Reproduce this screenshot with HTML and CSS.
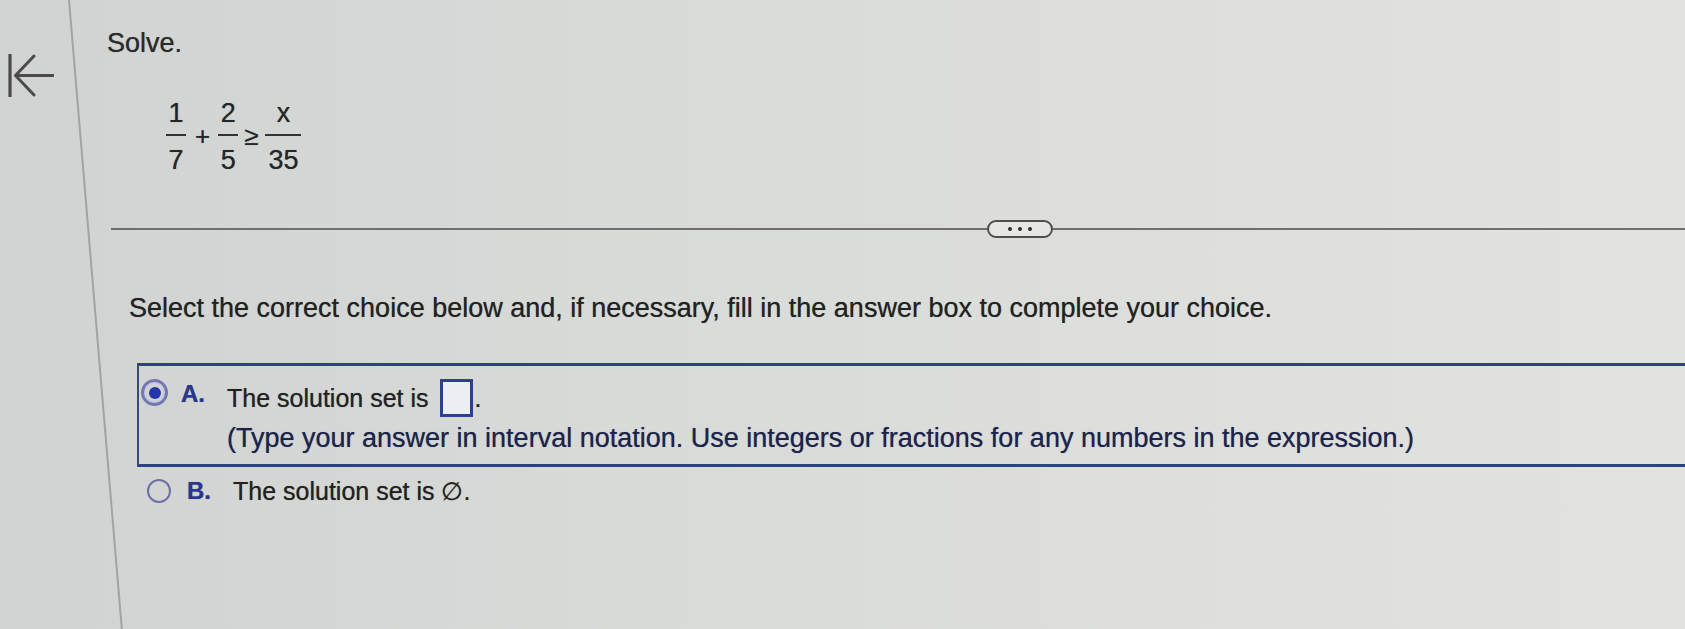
FILE: index.html
```html
<!DOCTYPE html>
<html lang="en">
<head>
<meta charset="utf-8">
<title>Solve</title>
<link rel="stylesheet" href="styles.css">
</head>
<body>
<div class="page">
  <aside class="sidebar">
    <button class="back" aria-label="Back">
      <svg width="46" height="46" viewBox="0 0 46 46">
        <path d="M2 0 V43" stroke="#4a4a4a" stroke-width="3.2" fill="none"/>
        <path d="M8 21.5 H45 M26 2 L7.5 21.5 L26 41" stroke="#4a4a4a" stroke-width="3" fill="none" stroke-linecap="round" stroke-linejoin="round"/>
      </svg>
    </button>
  </aside>
  <main class="main">
    <div class="title">Solve.</div>
    <div class="equation">
      <span class="frac"><span class="num">1</span><span class="bar"></span><span class="den">7</span></span>
      <span class="op plus">+</span>
      <span class="frac"><span class="num">2</span><span class="bar"></span><span class="den">5</span></span>
      <span class="op geq">≥</span>
      <span class="frac wide"><span class="num">x</span><span class="bar"></span><span class="den">35</span></span>
    </div>
    <div class="separator">
      <span class="rule left"></span>
      <span class="more"><i></i><i></i><i></i></span>
      <span class="rule right"></span>
    </div>
    <p class="prompt">Select the correct choice below and, if necessary, fill in the answer box to complete your choice.</p>
    <div class="choice choice-a">
      <span class="radio selected"><span class="dot"></span></span>
      <span class="label">A.</span>
      <div class="body">
        <div class="line1">The solution set is <span class="answer"></span><span class="period">.</span></div>
        <div class="hint">(Type your answer in interval notation. Use integers or fractions for any numbers in the expression.)</div>
      </div>
    </div>
    <div class="choice choice-b">
      <span class="radio"></span>
      <span class="label">B.</span>
      <div class="body">
        <div class="line1">The solution set is ∅.</div>
      </div>
    </div>
  </main>
</div>
</body>
</html>
```

FILE: styles.css
```css
html, body {
  margin: 0;
  padding: 0;
}
body {
  width: 1685px;
  height: 629px;
  overflow: hidden;
  background: linear-gradient(90deg, #d0d3d1 0%, #d9dbd9 40%, #e2e3e1 100%);
  font-family: "Liberation Sans", Arial, sans-serif;
  color: #222;
  text-shadow: 0 0 0.7px rgba(0, 0, 0, 0.55);
}
.page {
  display: flex;
  height: 629px;
}
.sidebar {
  flex: 0 0 80px;
  position: relative;
  padding-top: 54px;
  padding-left: 8px;
  box-sizing: border-box;
}
.sidebar::after {
  content: "";
  position: absolute;
  top: 0;
  right: 10px;
  width: 2px;
  height: 629px;
  background: #a0a4a5;
  transform: skewX(4.8deg);
  transform-origin: top left;
}
.back {
  display: block;
  border: 0;
  padding: 0;
  background: none;
  width: 46px;
  height: 46px;
}
.back svg {
  display: block;
}
.main {
  flex: 1;
  min-width: 0;
  padding-top: 28px;
}
.title {
  margin-left: 27px;
  font-size: 27px;
  line-height: 30px;
  color: #2a2a2a;
}
.equation {
  margin-top: 41px;
  margin-left: 86px;
  display: flex;
  align-items: center;
  font-size: 27px;
  color: #262626;
}
.frac {
  display: inline-flex;
  flex-direction: column;
  align-items: center;
  width: 20px;
}
.frac.wide {
  width: 36px;
}
.num, .den {
  line-height: 28px;
}
.bar {
  display: block;
  align-self: stretch;
  height: 2px;
  background: #333;
  margin: 7px 0 10px;
}
.op {
  font-size: 26px;
  line-height: 26px;
  padding-bottom: 1px;
}
.plus {
  margin: 0 8px 0 9px;
}
.geq {
  margin: 0 7px 0 6px;
}
.separator {
  margin-top: 46px;
  margin-left: 31px;
  display: flex;
  align-items: center;
  height: 18px;
}
.rule {
  height: 2px;
  background: #6f6f6f;
}
.rule.left {
  flex: 0 0 876px;
}
.rule.right {
  flex: 1;
}
.more {
  flex: 0 0 66px;
  height: 18px;
  box-sizing: border-box;
  border: 2px solid #4d4d4d;
  border-radius: 9px;
  background: #e6e7e5;
  display: flex;
  align-items: center;
  justify-content: center;
  gap: 6px;
}
.more i {
  width: 4px;
  height: 4px;
  border-radius: 50%;
  background: #2f2f2f;
}
.prompt {
  margin: 55px 0 0 49px;
  font-size: 27px;
  line-height: 30px;
  color: #222;
  white-space: nowrap;
}
.choice {
  display: flex;
  align-items: flex-start;
}
.choice-a {
  margin-top: 40px;
  margin-left: 57px;
  margin-right: -20px;
  border-top: 3px solid #2b4287;
  border-bottom: 3px solid #2b4287;
  border-left: 2px solid #3a4a7c;
  padding: 13px 0 11px 2px;
}
.radio {
  flex: 0 0 auto;
  width: 24px;
  height: 24px;
  box-sizing: border-box;
  border: 2.5px solid #6d70a6;
  border-radius: 50%;
  display: flex;
  align-items: center;
  justify-content: center;
}
.radio.selected {
  width: 27px;
  height: 27px;
  border: 3px solid #7479b0;
  box-shadow: inset 0 0 0 2px #c9cbe0;
}
.dot {
  width: 12px;
  height: 12px;
  border-radius: 50%;
  background: #2535ae;
}
.label {
  font-weight: bold;
  font-size: 24px;
  line-height: 28px;
  color: #2a3592;
}
.choice-a .label {
  margin-left: 13px;
  margin-top: 1px;
  width: 46px;
}
.line1 {
  display: flex;
  align-items: center;
  font-size: 25px;
  line-height: 30px;
  white-space: pre;
  color: #222;
}
.answer {
  display: inline-block;
  width: 33px;
  height: 38px;
  box-sizing: border-box;
  border: 3px solid #2e3f92;
  background: #eceef2;
  margin-left: 5px;
}
.period {
  margin-left: 1px;
}
.hint {
  margin-top: 6px;
  font-size: 27px;
  line-height: 30px;
  color: #1c2350;
  white-space: nowrap;
}
.choice-b {
  margin-top: 9px;
  margin-left: 67px;
  align-items: center;
}
.choice-b .label {
  margin-left: 16px;
  width: 46px;
}
```
